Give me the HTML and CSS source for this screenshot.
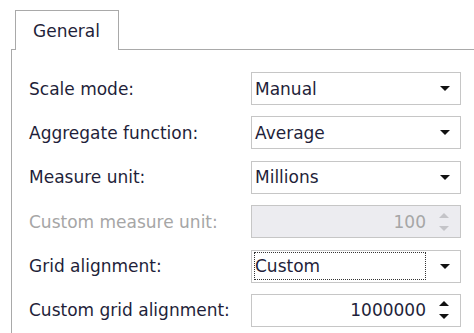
FILE: index.html
```html
<!DOCTYPE html>
<html lang="en">
<head>
  <meta charset="UTF-8">
  <title>Properties</title>
  <link rel="stylesheet" href="styles.css">
</head>
<body>

  <div class="tabs">
    <div class="tab">General</div>
  </div>

  <div class="panel">
    <div class="row">
      <label>Scale mode:</label>
      <div class="box">
        <span class="value">Manual</span>
        <span class="arrow"></span>
      </div>
    </div>

    <div class="row">
      <label>Aggregate function:</label>
      <div class="box">
        <span class="value">Average</span>
        <span class="arrow"></span>
      </div>
    </div>

    <div class="row">
      <label>Measure unit:</label>
      <div class="box">
        <span class="value">Millions</span>
        <span class="arrow"></span>
      </div>
    </div>

    <div class="row disabled">
      <label>Custom measure unit:</label>
      <div class="box">
        <span class="value number">100</span>
        <span class="spin"><span class="up"></span><span class="down"></span></span>
      </div>
    </div>

    <div class="row">
      <label>Grid alignment:</label>
      <div class="box">
        <span class="value focused">Custom</span>
        <span class="arrow"></span>
      </div>
    </div>

    <div class="row">
      <label>Custom grid alignment:</label>
      <div class="box">
        <span class="value number">1000000</span>
        <span class="spin"><span class="up"></span><span class="down"></span></span>
      </div>
    </div>
  </div>

</body>
</html>
```

FILE: styles.css
```css
body {
  margin: 0;
  background: #fff;
  font-family: "DejaVu Sans", Tahoma, sans-serif;
  font-size: 17px;
  color: #1f1f3a;
}

.tabs {
  display: flex;
  padding: 10px 0 0 15px;
}

.tab {
  width: 104px;
  height: 40px;
  box-sizing: border-box;
  padding: 10px 0 0 17px;
  border: 1px solid #a9a9a9;
  border-bottom: none;
  background: #fff;
  margin-bottom: -1px;
  position: relative;
}

.panel {
  margin-left: 11px;
  border-top: 1px solid #a9a9a9;
  border-left: 1px solid #a9a9a9;
  padding: 22px 0 20px 17px;
  display: flex;
  flex-direction: column;
  gap: 11.4px;
}

.row {
  display: grid;
  grid-template-columns: 222px 210px;
  align-items: center;
}

.box {
  height: 33px;
  box-sizing: border-box;
  border: 1px solid #c6c6c6;
  background: #fff;
  display: flex;
  align-items: center;
  padding: 0 10px 0 2px;
}

.value {
  flex: 1;
  padding: 4px 1px;
}

.value.number {
  text-align: right;
  padding-right: 13px;
}

.value.focused {
  outline: 1px dotted #333;
  outline-offset: -1px;
  margin-right: 14px;
}

.arrow {
  width: 0;
  height: 0;
  border-left: 5px solid transparent;
  border-right: 5px solid transparent;
  border-top: 5px solid #111;
}

.spin {
  display: flex;
  flex-direction: column;
  gap: 8px;
  margin-right: 1px;
}

.spin .up {
  border-left: 5px solid transparent;
  border-right: 5px solid transparent;
  border-bottom: 5px solid #111;
}

.spin .down {
  border-left: 5px solid transparent;
  border-right: 5px solid transparent;
  border-top: 5px solid #111;
}

.disabled label,
.disabled .value {
  color: #a6a6a6;
}

.disabled .box {
  background: #ececf0;
  border-color: #c6c6c6;
}

.disabled .spin .up {
  border-bottom-color: #c4c4c8;
}

.disabled .spin .down {
  border-top-color: #c4c4c8;
}
```
